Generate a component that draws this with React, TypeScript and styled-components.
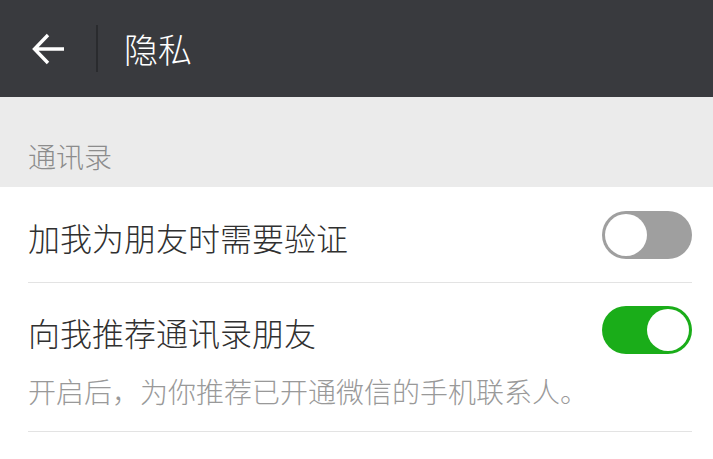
import React from "react";
import styled, { createGlobalStyle } from "styled-components";

const Global = createGlobalStyle`
  html, body { margin: 0; padding: 0; background: #ffffff; }
  body { font-family: "Noto Sans CJK SC", "Noto Sans", sans-serif; }
  * { box-sizing: border-box; }
`;

const Page = styled.div`
  width: 713px;
  height: 459px;
  overflow: hidden;
  background: #ffffff;
`;

const Header = styled.header`
  height: 97px;
  background: #393a3e;
  display: flex;
  align-items: center;
  padding-left: 32px;
`;

const BackButton = styled.div`
  width: 34px;
  height: 34px;
  display: flex;
  align-items: center;
  justify-content: center;
`;

const HeaderDivider = styled.div`
  width: 2px;
  height: 47px;
  background: #2a2b2e;
  margin-left: 30px;
  margin-right: 26px;
`;

const Title = styled.h1`
  margin: 0;
  font-size: 34px;
  font-weight: 300;
  color: #ffffff;
  line-height: 1;
`;

const SectionHeader = styled.div`
  height: 90px;
  background: #ebebeb;
  display: flex;
  align-items: flex-end;
  padding: 0 0 14px 28px;
  font-size: 28px;
  font-weight: 300;
  color: #8c8c8c;
  line-height: 34px;
`;

const List = styled.div`
  padding: 0 21px 0 28px;
  background: #ffffff;
`;

const Item = styled.div`
  border-bottom: 1px solid #e3e3e3;
`;

const Row = styled.div<{ $h: number }>`
  height: ${(p) => p.$h}px;
  display: flex;
  align-items: center;
  justify-content: space-between;
`;

const Label = styled.span`
  font-size: 32px;
  font-weight: 300;
  color: #303030;
  line-height: 1;
  padding-top: 4px;
`;

const Desc = styled.div`
  font-size: 28px;
  font-weight: 300;
  line-height: 28px;
  color: #999999;
  padding-bottom: 26px;
`;

const Toggle = styled.div<{ $on: boolean }>`
  width: 90px;
  height: 48px;
  border-radius: 24px;
  background: ${(p) => (p.$on ? "#1aad19" : "#9f9f9f")};
  padding: 3px;
  display: flex;
  justify-content: ${(p) => (p.$on ? "flex-end" : "flex-start")};
`;

const Knob = styled.div`
  width: 42px;
  height: 42px;
  border-radius: 50%;
  background: #ffffff;
`;

const BackArrow = () => (
  <svg width="34" height="34" viewBox="0 0 34 34" fill="none">
    <path
      d="M32 17H3M16 3L2.5 17L16 31"
      stroke="#ffffff"
      strokeWidth="3.4"
      strokeLinecap="butt"
      strokeLinejoin="miter"
    />
  </svg>
);

export default function App() {
  return (
    <Page>
      <Global />
      <Header>
        <BackButton>
          <BackArrow />
        </BackButton>
        <HeaderDivider />
        <Title>隐私</Title>
      </Header>
      <SectionHeader>通讯录</SectionHeader>
      <List>
        <Item>
          <Row $h={95}>
            <Label>加我为朋友时需要验证</Label>
            <Toggle $on={false}>
              <Knob />
            </Toggle>
          </Row>
        </Item>
        <Item>
          <Row $h={94}>
            <Label>向我推荐通讯录朋友</Label>
            <Toggle $on={true}>
              <Knob />
            </Toggle>
          </Row>
          <Desc>开启后，为你推荐已开通微信的手机联系人。</Desc>
        </Item>
      </List>
    </Page>
  );
}
